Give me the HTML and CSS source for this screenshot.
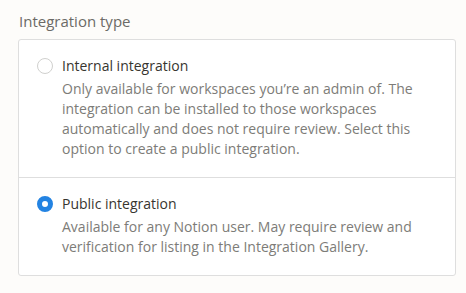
FILE: index.html
```html
<!DOCTYPE html>
<html lang="en">
<head>
    <meta charset="UTF-8">
    <meta name="viewport" content="width=device-width, initial-scale=1.0">
    <title>Integration type</title>
    <link rel="stylesheet" href="styles.css">
</head>
<body>
    <div class="container">
        <h2 class="section-title">Integration type</h2>

        <div class="option-card">
            <label class="option">
                <span class="radio"></span>
                <span class="option-text">
                    <span class="option-name">Internal integration</span>
                    <span class="option-desc">Only available for workspaces you’re an admin of. The integration can be installed to those workspaces automatically and does not require review. Select this option to create a public integration.</span>
                </span>
            </label>
            <label class="option">
                <span class="radio checked"></span>
                <span class="option-text">
                    <span class="option-name">Public integration</span>
                    <span class="option-desc">Available for any Notion user. May require review and verification for listing in the Integration Gallery.</span>
                </span>
            </label>
        </div>
    </div>
</body>
</html>
```

FILE: styles.css
```css
body {
    font-family: "Open Sans", "Noto Sans", sans-serif;
    margin: 0;
    padding: 0;
    background-color: #fdfcfa;
}
.container {
    padding: 11px 10px 0 18px;
}
.section-title {
    margin: 0 0 8px 1px;
    font-size: 15px;
    line-height: 20px;
    font-weight: 400;
    color: #6b6a66;
}
.option-card {
    background: #ffffff;
    border: 1px solid #dedede;
    border-radius: 3px;
}
.option {
    display: flex;
    align-items: flex-start;
    padding: 16px 18px 18px 18px;
    cursor: pointer;
}
.option + .option {
    border-top: 1px solid #dedede;
}
.radio {
    flex: none;
    width: 16px;
    height: 16px;
    margin-top: 2px;
    margin-right: 9px;
    box-sizing: border-box;
    border: 1.5px solid #d0d0ce;
    border-radius: 50%;
    background: #ffffff;
}
.radio.checked {
    border: 5px solid #2383e2;
    background: #ffffff;
}
.option-text {
    display: flex;
    flex-direction: column;
}
.option-name {
    font-size: 14px;
    line-height: 20px;
    color: #37352f;
}
.option-desc {
    margin-top: 3px;
    font-size: 14px;
    line-height: 20px;
    color: #7d7c78;
}
```
